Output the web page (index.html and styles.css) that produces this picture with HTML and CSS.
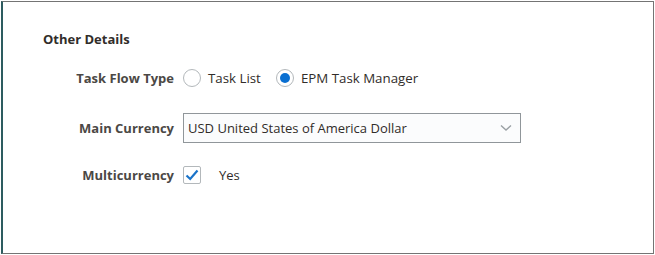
FILE: index.html
```html
<!DOCTYPE html>
<html lang="en">
  <head>
    <meta charset="UTF-8">
    <title>Other Details</title>
    <link rel="stylesheet" href="styles.css">
  </head>
  <body>
    <div class="panel">
      <h2 class="section-title">Other Details</h2>

      <div class="form-grid">
        <div class="form-label">Task Flow Type</div>
        <div class="radio-group">
          <label class="radio">
            <span class="radio-ring"></span>
            <span>Task List</span>
          </label>
          <label class="radio checked">
            <span class="radio-ring"></span>
            <span>EPM Task Manager</span>
          </label>
        </div>

        <div class="form-label">Main Currency</div>
        <div class="select">
          <span class="select-value">USD United States of America Dollar</span>
          <svg class="chevron" width="12" height="8" viewBox="0 0 12 8">
            <path d="M1 1.5 L6 6 L11 1.5" fill="none" stroke="#9aa0a4" stroke-width="1.4"/>
          </svg>
        </div>

        <div class="form-label">Multicurrency</div>
        <div class="check-row">
          <span class="checkbox">
            <svg width="14" height="12" viewBox="0 0 14 12">
              <path d="M1.5 6.5 L5.2 10 L12.5 1.5" fill="none" stroke="#1a73c9" stroke-width="2.2"/>
            </svg>
          </span>
          <span>Yes</span>
        </div>
      </div>
    </div>
  </body>
</html>
```

FILE: styles.css
```css
* { box-sizing: border-box; }

body {
  margin: 0;
  font-family: "Open Sans", "Noto Sans", Arial, sans-serif;
  font-size: 13px;
  color: #312d2a;
  background: #fff;
}

.panel {
  margin: 1px;
  width: 653px;
  height: 253px;
  border: 1px solid #747474;
  border-left: 2px solid #2d5c60;
  padding: 27px 0 0 40px;
}

.section-title {
  margin: 0;
  font-size: 13px;
  font-weight: 700;
  line-height: 20px;
  color: #312d2a;
}

.form-grid {
  margin-top: 17px;
  display: grid;
  grid-template-columns: 131px auto;
  column-gap: 9px;
  row-gap: 23px;
  align-items: center;
  justify-items: start;
}

.form-label {
  justify-self: end;
  font-weight: 700;
  color: #4b4845;
}

.radio-group {
  display: flex;
  align-items: center;
  gap: 15px;
  height: 24px;
  font-size: 13.3px;
}

.radio {
  display: flex;
  align-items: center;
  gap: 7px;
}

.radio-ring {
  width: 18px;
  height: 18px;
  border: 1px solid #b3b8bb;
  border-radius: 50%;
  background: #fff;
  display: flex;
  align-items: center;
  justify-content: center;
}

.radio.checked .radio-ring::after {
  content: "";
  width: 10px;
  height: 10px;
  border-radius: 50%;
  background: #0a6fd1;
}

.select {
  width: 338px;
  height: 30px;
  border: 1px solid #90969a;
  background: #fbfcfd;
  display: flex;
  align-items: center;
  justify-content: space-between;
  padding: 0 8px 0 4px;
}

.check-row {
  display: flex;
  align-items: center;
  gap: 18px;
}

.checkbox {
  width: 18px;
  height: 18px;
  border: 1px solid #b3b8bb;
  border-radius: 2px;
  background: #fff;
  display: flex;
  align-items: center;
  justify-content: center;
}
```
